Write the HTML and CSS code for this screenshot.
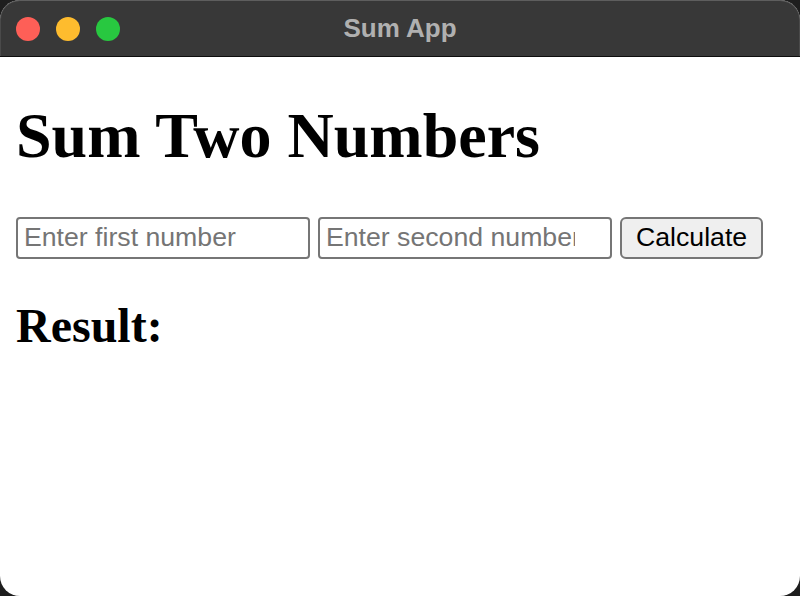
FILE: index.html
```html
<!DOCTYPE html>
<html lang="en">
<head>
<meta charset="utf-8">
<title>Sum App</title>
<link rel="stylesheet" href="styles.css">
</head>
<body>
<div class="window">
  <header class="titlebar">
    <div class="lights">
      <span class="light red"></span>
      <span class="light yellow"></span>
      <span class="light green"></span>
    </div>
    <div class="title">Sum App</div>
    <div class="spacer"></div>
  </header>
  <main class="content">
    <h1 class="heading">Sum Two Numbers</h1>
    <div class="form-row">
      <input class="num-input" type="text" placeholder="Enter first number">
      <input class="num-input" type="text" placeholder="Enter second number">
      <button class="calc-btn" type="button">Calculate</button>
    </div>
    <h2 class="result">Result:</h2>
  </main>
</div>
</body>
</html>
```
FILE: styles.css
```css
html, body {
  margin: 0;
  padding: 0;
  width: 800px;
  height: 596px;
  overflow: hidden;
  background: #1e1e1e;
}

.window {
  width: 800px;
  height: 596px;
  border-radius: 20px;
  overflow: hidden;
  background: #ffffff;
  display: flex;
  flex-direction: column;
}

.titlebar {
  height: 56px;
  flex: 0 0 56px;
  background: #383838;
  border-bottom: 1px solid #0e0e0e;
  box-shadow: inset 0 1px 0 #5e5e5e, inset 1px 0 0 #4a4a4a, inset -1px 0 0 #4a4a4a;
  border-radius: 20px 20px 0 0;
  display: grid;
  grid-template-columns: 1fr auto 1fr;
  align-items: center;
}

.lights {
  display: flex;
  gap: 16px;
  padding-left: 16px;
  padding-top: 2px;
  align-self: center;
}

.light {
  width: 24px;
  height: 24px;
  border-radius: 50%;
  display: block;
}

.red { background: #fe5f57; }
.yellow { background: #febc2e; }
.green { background: #28c840; }

.title {
  font-family: "Liberation Sans", Arial, sans-serif;
  font-weight: bold;
  font-size: 26px;
  color: #b0b0b0;
  padding-top: 0;
}

.content {
  flex: 1;
  padding: 0 16px;
  font-family: "Liberation Serif", "Times New Roman", serif;
  color: #000;
}

.heading {
  font-family: "Liberation Serif", "Times New Roman", serif;
  font-size: 64px;
  font-weight: bold;
  margin: 42px 0 44px 0;
  line-height: 73.6px;
}

.form-row {
  display: flex;
  gap: 8px;
  align-items: flex-start;
}

.num-input {
  box-sizing: border-box;
  width: 294px;
  height: 42px;
  border: 2px solid #767676;
  border-radius: 4px;
  padding: 0 35px 0 6px;
  margin: 0;
  font-family: "Liberation Sans", Arial, sans-serif;
  font-size: 26.67px;
  color: #000;
  background: #fff;
  outline: none;
}

.num-input::placeholder {
  color: #757575;
  opacity: 1;
}

.calc-btn {
  box-sizing: border-box;
  height: 42px;
  width: 143px;
  margin: 0;
  padding: 0 14px;
  background: #efefef;
  border: 2px solid #767676;
  border-radius: 6px;
  font-family: "Liberation Sans", Arial, sans-serif;
  font-size: 26.67px;
  color: #000;
}

.result {
  font-family: "Liberation Serif", "Times New Roman", serif;
  font-size: 48px;
  font-weight: bold;
  margin: 39px 0 0 0;
  line-height: 55px;
}
```
